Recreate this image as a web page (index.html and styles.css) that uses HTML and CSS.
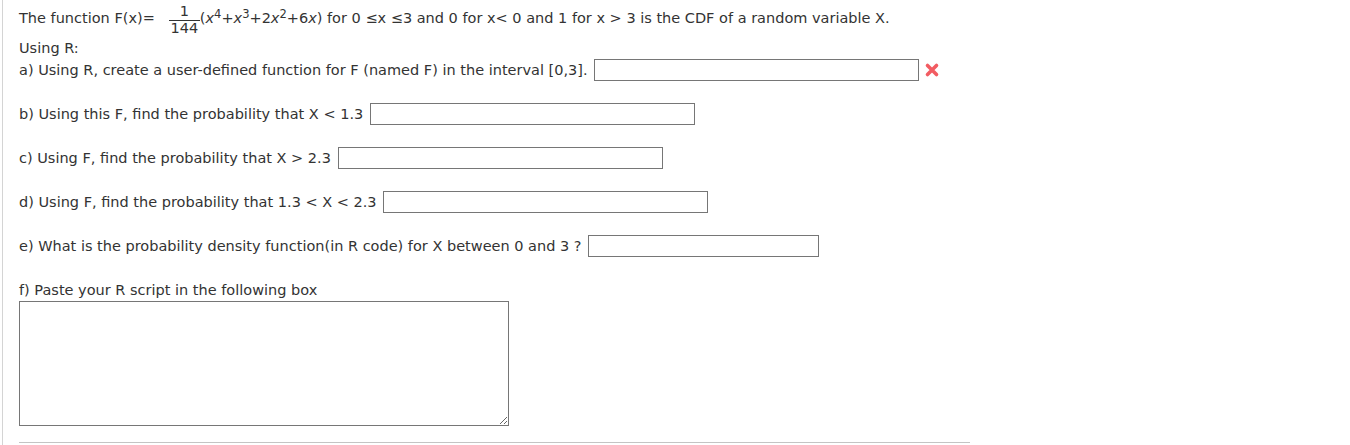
FILE: index.html
```html
<!DOCTYPE html>
<html>
<head>
<meta charset="utf-8">
<link rel="stylesheet" href="styles.css">
</head>
<body>
<div class="page">
  <div class="line1">
    <span>The function F(x)=</span>
    <span class="frac"><span class="num">1</span><span class="den">144</span></span><span>(<i>x</i><sup>4</sup>+<i>x</i><sup>3</sup>+2<i>x</i><sup>2</sup>+6<i>x</i>) for 0 ≤x ≤3 and 0 for x&lt; 0 and 1 for x &gt; 3 is the CDF of a random variable X.</span>
  </div>
  <div class="row using">Using R:</div>
  <div class="row q">a) Using R, create a user-defined function for F (named F) in the interval [0,3]. <input class="box" type="text"><svg class="xmark" width="16" height="16" viewBox="0 0 16 16"><path d="M3.5 3.5 L12.5 12.5 M12.5 3.5 L3.5 12.5" stroke="#f25c62" stroke-width="3.6" stroke-linecap="round"/></svg></div>
  <div class="row q">b) Using this F, find the probability that X &lt; 1.3 <input class="box" type="text"></div>
  <div class="row q">c) Using F, find the probability that X &gt; 2.3 <input class="box" type="text"></div>
  <div class="row q">d) Using F, find the probability that 1.3 &lt; X &lt; 2.3 <input class="box" type="text"></div>
  <div class="row q">e) What is the probability density function(in R code) for X between 0 and 3 ? <input class="box short" type="text"></div>
  <div class="row flabel">f) Paste your R script in the following box</div>
  <textarea class="script"></textarea>
  <div class="rule"></div>
</div>
</body>
</html>
```

FILE: styles.css
```css
html, body {
  margin: 0;
  padding: 0;
  background: #fff;
}
body {
  font-family: "DejaVu Sans", Verdana, sans-serif;
  font-size: 14.5px;
  color: #333;
}
.page {
  margin-left: 2px;
  border-left: 1px solid #d4d4d4;
  padding: 3px 0 0 16px;
  height: 445px;
  box-sizing: border-box;
}
.line1 {
  height: 30px;
  display: flex;
  align-items: center;
  white-space: pre;
}
.frac {
  display: inline-flex;
  flex-direction: column;
  align-items: center;
  margin: 0 0 0 14px;
  position: relative;
  top: 1px;
}
.num {
  display: block;
  line-height: 16px;
  padding-bottom: 1px;
  border-bottom: 1px solid #333;
  width: 31px;
  text-align: center;
}
.den {
  display: block;
  line-height: 15px;
}
sup {
  font-size: 11.5px;
  vertical-align: 5px;
  line-height: 0;
}
.using {
  margin-top: 4px;
}
.row {
  height: 22px;
  display: flex;
  align-items: center;
  white-space: pre;
}
.q {
  margin-bottom: 22px;
}
.box {
  width: 325px;
  height: 22px;
  box-sizing: border-box;
  border: 1px solid #767676;
  border-radius: 0;
  margin: 0 0 0 2px;
  padding: 0;
  font: inherit;
}
.short {
  width: 231px;
}
.xmark {
  margin-left: 5px;
}
.flabel {
  margin-top: 2px;
}
.script {
  display: block;
  width: 490px;
  height: 125px;
  box-sizing: border-box;
  border: 1px solid #767676;
  border-radius: 0;
  margin: 0;
  padding: 2px;
  font: inherit;
}
.rule {
  width: 951px;
  height: 1px;
  background: #c4c4c4;
  margin-top: 16px;
}
```
